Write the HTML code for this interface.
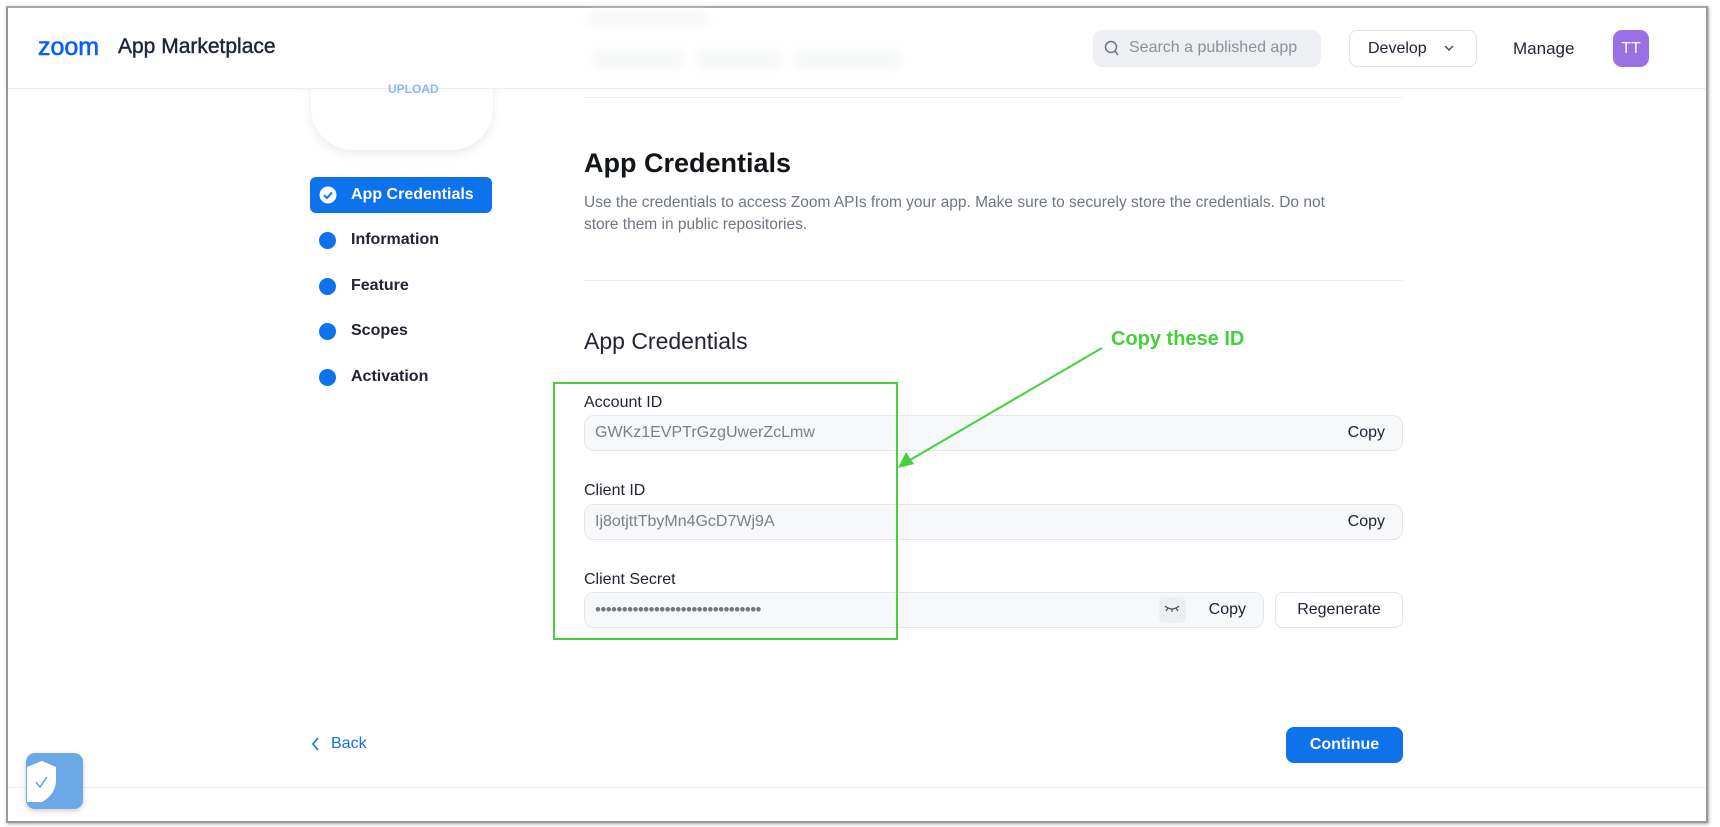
<!DOCTYPE html>
<html><head><meta charset="utf-8"><style>
*{box-sizing:border-box;margin:0;padding:0}
body{width:1720px;height:827px;background:#fff;font-family:"Liberation Sans",sans-serif;color:#131619;position:relative;overflow:hidden}
.frame{position:absolute;left:6px;top:6px;width:1702px;height:817px;border:2px solid #9a9a9a;border-top-color:#a8a8a8;box-shadow:1px 1px 3px rgba(0,0,0,.35)}
.abs{position:absolute}
.header{position:absolute;left:8px;top:8px;width:1698px;height:81px;background:rgba(255,255,255,.95);border-bottom:1px solid #eceef1;box-shadow:0 2px 4px rgba(0,0,0,.03)}
.blob{position:absolute;background:#f6f7f8;border-radius:6px;filter:blur(4px)}
.dot{position:absolute;width:17px;height:17px;border-radius:50%;background:#0e72ed;left:319px}
.navt{position:absolute;left:351px;font-size:16px;font-weight:bold;color:#232333}
.inp{position:absolute;left:584px;height:36px;background:#f7f8fa;border:1px solid #e4e6ea;border-radius:10px;font-size:16px;color:#7a7f87;padding-left:10px;line-height:34px}
.copy{position:absolute;right:17px;top:0;color:#232333;font-size:16px;line-height:34px}
.lab{position:absolute;left:584px;font-size:16px;color:#232333}
</style></head><body>
<div class="frame"></div>
<div class="abs" style="left:311px;top:40px;width:182px;height:110px;border-radius:0 0 42px 42px;background:#fff;box-shadow:0 4px 10px rgba(0,0,0,.08)"></div>
<div class="header">
 <div class="blob" style="left:580px;top:4px;width:120px;height:14px"></div>
 <div class="blob" style="left:585px;top:42px;width:90px;height:18px"></div>
 <div class="blob" style="left:688px;top:42px;width:85px;height:18px"></div>
 <div class="blob" style="left:787px;top:42px;width:105px;height:18px"></div>
 <div class="abs" style="left:380px;top:74px;font-size:12px;color:#8ab8f5;font-weight:bold">UPLOAD</div>
</div>
<div class="abs" style="left:38px;top:33px;font-size:25px;color:#0b5cff;-webkit-text-stroke:0.6px #0b5cff">zoom</div>
<div class="abs" style="left:118px;top:35px;font-size:21px;color:#1c2436;-webkit-text-stroke:0.4px #1c2436">App Marketplace</div>
<div class="abs" style="left:1093px;top:30px;width:228px;height:37px;background:#eeeff2;border-radius:9px"></div>
<svg class="abs" style="left:1104px;top:40px" width="16" height="17" viewBox="0 0 16 17"><circle cx="7" cy="7" r="5.5" fill="none" stroke="#6e7680" stroke-width="1.5"/><line x1="11" y1="11" x2="14" y2="15" stroke="#6e7680" stroke-width="1.5"/></svg>
<div class="abs" style="left:1129px;top:39px;font-size:16px;color:#8a9099">Search a published app</div>
<div class="abs" style="left:1349px;top:30px;width:128px;height:37px;border:1px solid #dfe1e5;border-radius:8px;font-size:16px;color:#232333;line-height:35px;padding-left:18px">Develop</div>
<svg class="abs" style="left:1444px;top:44px" width="10" height="8" viewBox="0 0 10 8"><path d="M1 2 L5 6 L9 2" fill="none" stroke="#444" stroke-width="1.4"/></svg>
<div class="abs" style="left:1513px;top:39px;font-size:17px;color:#232333">Manage</div>
<div class="abs" style="left:1613px;top:30px;width:36px;height:37px;border-radius:9px;background:#9b6fe6;color:#fff;font-size:16px;text-align:center;line-height:37px">TT</div>
<div class="abs" style="left:310px;top:177px;width:182px;height:36px;background:#0e72ed;border-radius:6px"></div>
<svg class="abs" style="left:319px;top:186px" width="18" height="18" viewBox="0 0 18 18"><circle cx="9" cy="9" r="8.5" fill="#fff"/><path d="M5 9.3 L8 12 L13 6.5" fill="none" stroke="#0e72ed" stroke-width="2"/></svg>
<div class="navt" style="top:186px;color:#fff">App Credentials</div>
<div class="dot" style="top:232px"></div><div class="navt" style="top:231px">Information</div>
<div class="dot" style="top:278px"></div><div class="navt" style="top:277px">Feature</div>
<div class="dot" style="top:323px"></div><div class="navt" style="top:322px">Scopes</div>
<div class="dot" style="top:369px"></div><div class="navt" style="top:368px">Activation</div>
<div class="abs" style="left:584px;top:97px;width:819px;height:1px;background:#eceef1"></div>
<div class="abs" style="left:584px;top:148px;font-size:27px;font-weight:bold;color:#131619">App Credentials</div>
<div class="abs" style="left:584px;top:192px;width:830px;font-size:15.5px;color:#6e7680;line-height:22px">Use the credentials to access Zoom APIs from your app. Make sure to securely store the credentials. Do not<br>store them in public repositories.</div>
<div class="abs" style="left:584px;top:280px;width:819px;height:1px;background:#eceef1"></div>
<div class="abs" style="left:584px;top:328px;font-size:23px;color:#232333">App Credentials</div>
<div class="lab" style="top:394px">Account ID</div>
<div class="inp" style="top:415px;width:819px">GWKz1EVPTrGzgUwerZcLmw<span class="copy">Copy</span></div>
<div class="lab" style="top:482px">Client ID</div>
<div class="inp" style="top:504px;width:819px">Ij8otjttTbyMn4GcD7Wj9A<span class="copy">Copy</span></div>
<div class="lab" style="top:571px">Client Secret</div>
<div class="inp" style="top:592px;width:680px;letter-spacing:-0.6px;font-size:17px;color:#777">•••••••••••••••••••••••••••••••<span class="copy" style="font-size:16px;letter-spacing:0">Copy</span></div>
<div class="abs" style="left:1159px;top:597px;width:27px;height:26px;background:#eeeff1;border-radius:5px"></div>
<svg class="abs" style="left:1164px;top:604px" width="16" height="10" viewBox="0 0 16 10"><path d="M1 2 Q8 8 15 2 M4 4 L2 7 M8 5.5 L8 8 M12 4 L14 7" fill="none" stroke="#555" stroke-width="1.2"/></svg>
<div class="abs" style="left:1275px;top:592px;width:128px;height:36px;border:1px solid #e2e4e8;border-radius:8px;text-align:center;line-height:34px;font-size:16px;color:#232333">Regenerate</div>
<div class="abs" style="left:553px;top:382px;width:345px;height:258px;border:2.5px solid #44d13a"></div>
<svg class="abs" style="left:0;top:0" width="1720" height="827"><line x1="1102" y1="348" x2="910" y2="460" stroke="#44d13a" stroke-width="2"/><polygon points="898,468 906,452 914,464" fill="#44d13a"/></svg>
<div class="abs" style="left:1111px;top:328px;font-size:20px;font-weight:bold;color:#44d13a">Copy these ID</div>
<svg class="abs" style="left:311px;top:736px" width="10" height="16" viewBox="0 0 10 16"><path d="M7 2 L2 8 L7 14" fill="none" stroke="#0e72ed" stroke-width="1.6"/></svg>
<div class="abs" style="left:331px;top:735px;font-size:16px;color:#0e72ed">Back</div>
<div class="abs" style="left:1286px;top:727px;width:117px;height:36px;background:#0e72ed;border-radius:8px;color:#fff;font-size:16px;font-weight:bold;text-align:center;line-height:36px">Continue</div>
<div class="abs" style="left:8px;top:787px;width:1698px;height:1px;background:#eceef1"></div>
<div class="abs" style="left:26px;top:753px;width:57px;height:56px;background:#6aa9e6;border-radius:9px;box-shadow:0 2px 6px rgba(0,0,0,.2)"></div>
<svg class="abs" style="left:26px;top:760px" width="36" height="44" viewBox="0 0 36 44"><path d="M16 1 L30 7 L30 20 Q30 34 16 42 L1 42 L1 7 Z" fill="#fff"/><path d="M10 22 L14 27 L21 17" fill="none" stroke="#6aa9e6" stroke-width="1.6"/></svg>
</body></html>
